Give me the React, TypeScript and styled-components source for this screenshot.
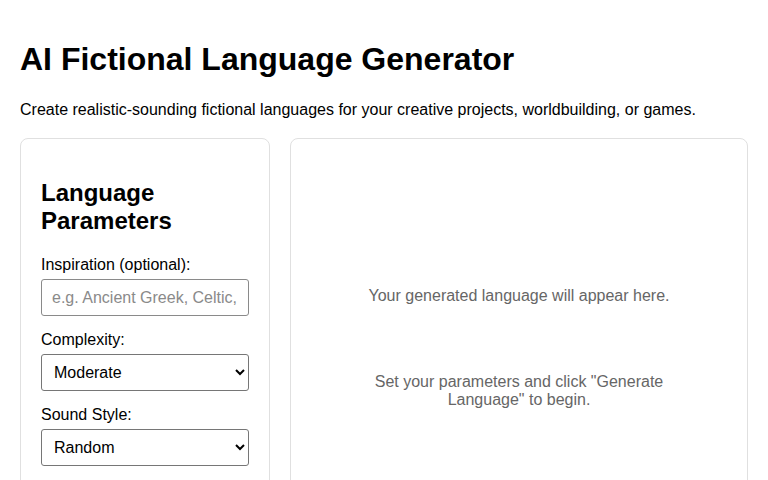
import React from "react";
import styled, { createGlobalStyle } from "styled-components";

const GlobalStyle = createGlobalStyle`
  body {
    margin: 0;
    font-family: "Liberation Sans", Arial, sans-serif;
    color: #000;
    background: #fff;
  }
`;

const Page = styled.div`
  padding: 20px;
`;

const Title = styled.h1`
  font-size: 32px;
  margin: 21px 0 23px;
`;

const Intro = styled.p`
  font-size: 16px;
  margin: 0 0 19px;
`;

const Layout = styled.div`
  display: grid;
  grid-template-columns: 250px 1fr;
  gap: 20px;
  align-items: start;
`;

const Panel = styled.section`
  border: 1px solid #e0e0e0;
  border-radius: 8px;
  padding: 20px;
  min-height: 400px;
`;

const PanelTitle = styled.h2`
  font-size: 24px;
  line-height: 28px;
  margin: 20px 0 21px;
`;

const Field = styled.div`
  margin-bottom: 15px;
`;

const Label = styled.label`
  display: block;
  font-size: 16px;
  margin-bottom: 5px;
`;

const TextInput = styled.input`
  box-sizing: border-box;
  width: 100%;
  height: 37px;
  padding: 8px 10px;
  font: 16px "Liberation Sans", Arial, sans-serif;
  border: 1px solid #8a8a8a;
  border-radius: 3px;

  &::placeholder {
    color: #8a8a8a;
  }
`;

const Select = styled.select`
  box-sizing: border-box;
  width: 100%;
  height: 37px;
  padding: 6px 8px;
  font: 16px "Liberation Sans", Arial, sans-serif;
  color: #000;
  background: #fff;
  border: 1px solid #767676;
  border-radius: 3px;
`;

const Placeholder = styled.div`
  display: flex;
  flex-direction: column;
  gap: 68px;
  padding: 128px 50px 0;
  text-align: center;
  color: #666;
`;

const Hint = styled.p`
  margin: 0;
  font-size: 16px;
  line-height: 18px;
`;

export default function App() {
  return (
    <Page>
      <GlobalStyle />
      <Title>AI Fictional Language Generator</Title>
      <Intro>
        Create realistic-sounding fictional languages for your creative
        projects, worldbuilding, or games.
      </Intro>
      <Layout>
        <Panel>
          <PanelTitle>Language Parameters</PanelTitle>
          <Field>
            <Label htmlFor="inspiration">Inspiration (optional):</Label>
            <TextInput
              id="inspiration"
              placeholder="e.g. Ancient Greek, Celtic, Japanese"
            />
          </Field>
          <Field>
            <Label htmlFor="complexity">Complexity:</Label>
            <Select id="complexity" defaultValue="moderate">
              <option value="simple">Simple</option>
              <option value="moderate">Moderate</option>
              <option value="complex">Complex</option>
            </Select>
          </Field>
          <Field>
            <Label htmlFor="sound">Sound Style:</Label>
            <Select id="sound" defaultValue="random">
              <option value="random">Random</option>
              <option value="melodic">Melodic</option>
              <option value="harsh">Harsh</option>
            </Select>
          </Field>
        </Panel>
        <Panel>
          <Placeholder>
            <Hint>Your generated language will appear here.</Hint>
            <Hint>
              Set your parameters and click "Generate Language" to begin.
            </Hint>
          </Placeholder>
        </Panel>
      </Layout>
    </Page>
  );
}
